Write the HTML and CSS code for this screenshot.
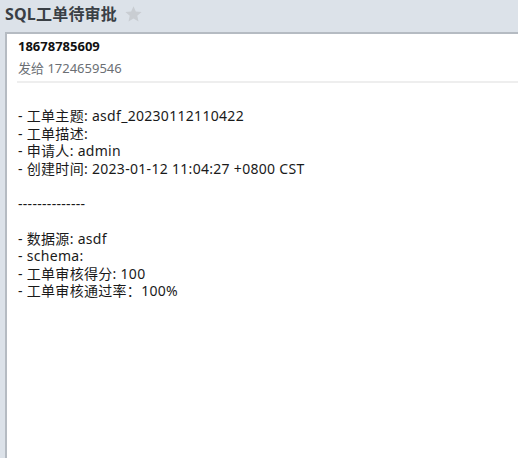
FILE: index.html
```html
<!DOCTYPE html>
<html lang="zh">
<head>
<meta charset="utf-8">
<link rel="stylesheet" href="styles.css">
</head>
<body>
<div class="page">
  <div class="header">
    <h1 class="title">SQL工单待审批</h1>
    <svg class="star" width="19" height="18" viewBox="0 0 24 24"><path d="M12 1.5l3.1 7.1 7.7.7-5.8 5.1 1.7 7.6L12 18l-6.7 4 1.7-7.6L1.2 9.3l7.7-.7z" fill="#c9cdd2"/></svg>
  </div>
  <div class="panel">
    <div class="meta">
      <div class="from">18678785609</div>
      <div class="to">发给 1724659546</div>
    </div>
    <div class="body">
      <p>- 工单主题: asdf_20230112110422</p>
      <p>- 工单描述:</p>
      <p>- 申请人: admin</p>
      <p>- 创建时间: 2023-01-12 11:04:27 +0800 CST</p>
      <p class="blank">&nbsp;</p>
      <p>--------------</p>
      <p class="blank">&nbsp;</p>
      <p>- 数据源: asdf</p>
      <p>- schema:</p>
      <p>- 工单审核得分: 100</p>
      <p>- 工单审核通过率：100%</p>
    </div>
  </div>
</div>
</body>
</html>
```
FILE: styles.css
```css
html, body {
  margin: 0;
  padding: 0;
  height: 100%;
}
body {
  background: #dce2e9;
  font-family: "Noto Sans", "Noto Sans CJK SC", sans-serif;
  overflow: hidden;
}
.page {
  display: flex;
  flex-direction: column;
  height: 458px;
}
.header {
  display: flex;
  align-items: center;
  gap: 7px;
  height: 32px;
  padding-left: 5px;
}
.title {
  margin: 0;
  font-size: 16px;
  font-weight: bold;
  color: #3a3f45;
  line-height: 24px;
  margin-top: -4px;
  letter-spacing: 0.2px;
}
.star {
  margin-top: -5px;
}
.panel {
  flex: 1;
  margin-left: 5px;
  background: #fff;
  border-top: 2px solid #b5bbc2;
  border-left: 2px solid #b5bbc2;
  padding-left: 10px;
}
.meta {
  border-bottom: 2px solid #eeeeee;
  padding: 2px 0 3px 1px;
}
.from {
  font-size: 13px;
  font-weight: bold;
  color: #111;
  line-height: 20px;
}
.to {
  font-size: 13px;
  color: #6b6f74;
  line-height: 20px;
  margin-top: 2px;
}
.body {
  padding: 24px 0 0 1px;
  font-size: 14px;
  color: #1a1a1a;
  letter-spacing: 0.3px;
}
.body p {
  margin: 0;
  line-height: 17.5px;
}
```
